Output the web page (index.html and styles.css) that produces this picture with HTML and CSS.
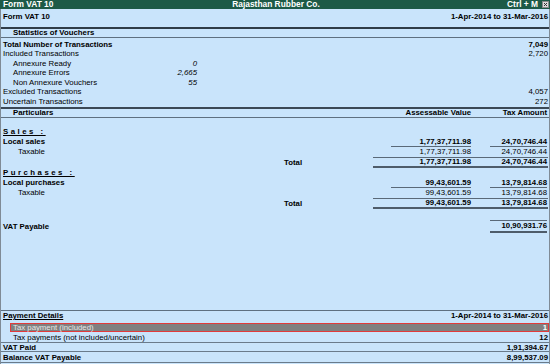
FILE: index.html
```html
<!DOCTYPE html>
<html>
<head>
<meta charset="utf-8">
<link rel="stylesheet" href="styles.css">
</head>
<body>
<div class="win">
  <div class="title">
    <span>Form VAT 10</span>
    <span>Rajasthan Rubber Co.</span>
    <span class="tright">Ctrl + M
      <svg class="close" width="7" height="7" viewBox="0 0 7 7"><rect x="0.5" y="0.5" width="6" height="6" fill="#dcdcdc" stroke="#8a8a8a"/><path d="M2 2L5 5M5 2L2 5" stroke="#333" stroke-width="1"/></svg>
    </span>
  </div>
  <div class="frame">
    <div class="row head b"><span class="lbl">Form VAT 10</span><span>1-Apr-2014 to 31-Mar-2016</span></div>
    <div class="rule-dark"></div>
    <div class="row sec b"><span class="lbl">Statistics of Vouchers</span></div>
    <div class="rule"></div>
    <div class="stats">
      <div class="row st b"><span class="lbl">Total Number of Transactions</span><span>7,049</span></div>
      <div class="row st"><span class="lbl">Included Transactions</span><span>2,720</span></div>
      <div class="row st sub"><span class="slbl">Annexure Ready</span><span class="sv">0</span></div>
      <div class="row st sub"><span class="slbl">Annexure Errors</span><span class="sv">2,665</span></div>
      <div class="row st sub"><span class="slbl">Non Annexure Vouchers</span><span class="sv">55</span></div>
      <div class="row st"><span class="lbl">Excluded Transactions</span><span>4,057</span></div>
      <div class="row st"><span class="lbl">Uncertain Transactions</span><span>272</span></div>
    </div>
    <div class="rule-thick"></div>
    <div class="row sec b"><span class="lbl">Particulars</span><span class="av">Assessable Value</span><span class="ta">Tax Amount</span></div>
    <div class="rule"></div>
    <div class="body">
      <div class="row br b"><span class="lbl grp">Sales :</span></div>
      <div class="row br b"><span class="lbl">Local sales</span><span class="av"><span class="ul ula">1,77,37,711.98</span></span><span class="ta"><span class="ul ult">24,70,746.44</span></span></div>
      <div class="row br"><span class="lbl ind">Taxable</span><span class="av">1,77,37,711.98</span><span class="ta">24,70,746.44</span></div>
      <div class="row br tot b"><span class="lbl"><span class="totl">Total</span></span><span class="av">1,77,37,711.98</span><span class="ta">24,70,746.44</span></div>
      <div class="row br b"><span class="lbl grp">Purchases :</span></div>
      <div class="row br b"><span class="lbl">Local purchases</span><span class="av"><span class="ul ula">99,43,601.59</span></span><span class="ta"><span class="ul ult">13,79,814.68</span></span></div>
      <div class="row br"><span class="lbl ind">Taxable</span><span class="av">99,43,601.59</span><span class="ta">13,79,814.68</span></div>
      <div class="row br tot b"><span class="lbl"><span class="totl">Total</span></span><span class="av">99,43,601.59</span><span class="ta">13,79,814.68</span></div>
      <div class="row vat b"><span class="lbl">VAT Payable</span><span class="ta"><span class="vatv">10,90,931.76</span></span></div>
    </div>
    <div class="spacer"></div>
    <div class="pay">
      <div class="rule"></div>
      <div class="row pd b"><span class="lbl u">Payment Details</span><span>1-Apr-2014 to 31-Mar-2016</span></div>
      <div class="row hl"><span class="lbl">Tax payment (included)</span><span class="b hv">1</span></div>
      <div class="row pr pr1"><span class="lbl ind2">Tax payments (not included/uncertain)</span><span class="b">12</span></div>
      <div class="row pr pr2 b"><span class="lbl">VAT Paid</span><span>1,91,394.67</span></div>
      <div class="row pr pr3 b"><span class="lbl">Balance VAT Payable</span><span>8,99,537.09</span></div>
    </div>
  </div>
</div>
</body>
</html>
```

FILE: styles.css
```css
* { box-sizing: border-box; margin: 0; padding: 0; }
html, body { width: 550px; height: 364px; overflow: hidden; }
body {
  font-family: "Liberation Sans", Arial, sans-serif;
  font-size: 7.8px;
  color: #000;
  background: #c9e4fb;
}
.b { font-weight: bold; color: #000; }
.win { display: flex; flex-direction: column; height: 364px; }

.title {
  height: 9px;
  background: #1d5a47;
  color: #fff;
  font-weight: bold;
  font-size: 8.4px;
  line-height: 9px;
  display: grid;
  grid-template-columns: 1fr auto 1fr;
  padding: 0 1px 0 3px;
}
.tright { justify-self: end; display: flex; align-items: center; gap: 4px; }
.close { display: block; }

.frame {
  flex: 1;
  display: flex;
  flex-direction: column;
  border-left: 1px solid #7f8b96;
  border-right: 1px solid #7f8b96;
}
.row { display: flex; align-items: center; padding: 0 1px 0 2px; white-space: nowrap; }
.lbl { flex: 1; }

.head { height: 18px; align-items: flex-start; line-height: 15px; }
.rule-dark { height: 2px; background: #2f3c47; }
.rule { height: 1px; background: #5f7080; }
.rule-thick { height: 2px; background: #3b4855; }
.sec { height: 8px; line-height: 8px; }
.sec .lbl { padding-left: 10px; }

.stats { padding-top: 1.5px; }
.st { height: 9.6px; line-height: 9.6px; }
.sub { padding-left: 12px; }
.slbl { width: 135px; }
.sv { width: 49px; text-align: right; font-style: italic; }

.av { width: 98px; text-align: right; }
.ta { width: 77px; text-align: right; padding-right: 1px; }

.body { padding-top: 9.3px; }
.br { height: 10px; line-height: 9px; }
.grp { letter-spacing: 2.5px; text-decoration: underline; text-underline-offset: 1px; }
.ind { padding-left: 15px; }
.ul { display: inline-block; border-bottom: 1px solid #5a6978; line-height: 9px; }
.ula { width: 80px; }
.ult { width: 57px; }
.tot { height: 11px; }
.tot .totl { margin-left: 281px; }
.tot .av, .tot .ta { border-top: 1px solid #5a6978; border-bottom: 2px solid #4e5c6a; line-height: 8px; height: 11px; padding-top: 0.5px; }
.vat { margin-top: 11px; height: 13px; }
.vatv { display: inline-block; width: 57px; border-top: 1px solid #5a6978; border-bottom: 2px solid #4e5c6a; line-height: 10px; }

.spacer { flex: 1; }
.pay { display: flex; flex-direction: column; padding-bottom: 1px; }
.pd { height: 10px; line-height: 10px; margin-bottom: 2px; }
.u { text-decoration: underline; text-underline-offset: 1px; }
.hl {
  height: 9px;
  margin-left: 9px;
  background: #808080;
  border: 1px solid #e23a3a;
  color: #e6e6e6;
  padding: 0 1px 0 2px;
  line-height: 7px;
}
.hv { color: #fff; }
.pr { border-bottom: 1px solid #6a7b8b; }
.pr1 { height: 11px; }
.pr2 { height: 9px; }
.pr3 { height: 11px; }
.ind2 { padding-left: 10px; }
```
